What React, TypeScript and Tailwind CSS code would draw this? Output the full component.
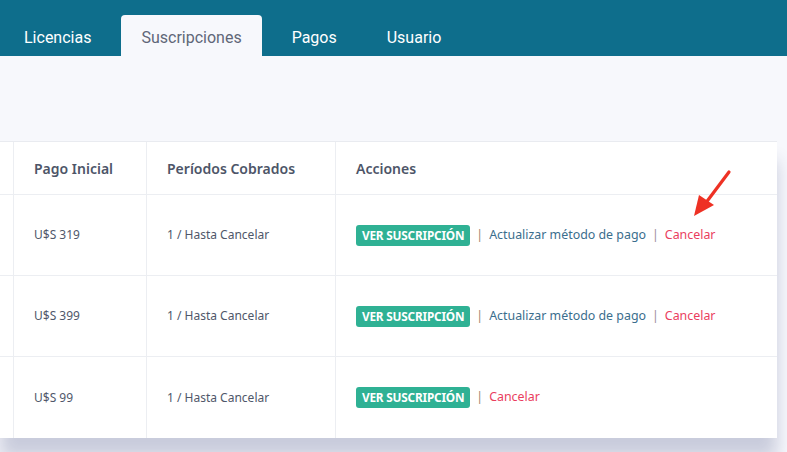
import React from 'react';

const tabs = ['Licencias', 'Suscripciones', 'Pagos', 'Usuario'];

const rows = [
  { amount: 'U$S 319', periods: '1 / Hasta Cancelar', update: true },
  { amount: 'U$S 399', periods: '1 / Hasta Cancelar', update: true },
  { amount: 'U$S 99', periods: '1 / Hasta Cancelar', update: false },
];

const cell = 'flex items-center border-l border-[#eceef2]';

const App = () => {
  return (
    <div className="relative h-[452px] w-[787px] overflow-hidden bg-[#f7f8fc] font-['Noto_Sans',sans-serif]">
      <header className="flex h-[56px] items-end gap-[10px] bg-[#0e6e8c] pl-[4px] font-['Roboto',sans-serif]">
        {tabs.map((tab) => (
          <div
            key={tab}
            className={
              tab === 'Suscripciones'
                ? 'h-[41px] rounded-t-[4px] bg-[#f7f8fc] px-5 pt-[13px] text-[16px] leading-[20px] text-[#5f6778]'
                : 'h-[41px] px-5 pt-[13px] text-[16px] leading-[20px] text-white'
            }
          >
            {tab}
          </div>
        ))}
      </header>

      <div className="mt-[85px] w-[777px] border-t border-[#e9ebf0] bg-white shadow-[0_20px_16px_rgba(40,50,110,0.22)]">
        <div className="grid h-[53px] grid-cols-[13px_133px_189px_442px] border-b border-[#eceef2] text-[14px] font-semibold text-[#4d5568]">
          <div />
          <div className={`${cell} pl-5`}>Pago Inicial</div>
          <div className={`${cell} pl-5`}>Períodos Cobrados</div>
          <div className={`${cell} pl-5`}>Acciones</div>
        </div>
        {rows.map((row, i) => (
          <div
            key={row.amount}
            className={`grid h-[81px] grid-cols-[13px_133px_189px_442px] text-[12px] text-[#4f576a] ${
              i < rows.length - 1 ? 'border-b border-[#eceef2]' : ''
            }`}
          >
            <div />
            <div className={`${cell} pl-5`}>{row.amount}</div>
            <div className={`${cell} pl-5`}>{row.periods}</div>
            <div className={`${cell} gap-[6px] pl-5 text-[12.4px]`}>
              <span className="rounded-[3px] bg-[#2fb194] px-[6px] py-[2px] text-[11.8px] font-bold leading-[17px] tracking-[-0.2px] text-white">
                VER SUSCRIPCIÓN
              </span>
              <span className="text-[#9a7f6e]">|</span>
              {row.update && (
                <>
                  <span className="text-[#3b6e8d]">Actualizar método de pago</span>
                  <span className="text-[#9a8a98]">|</span>
                </>
              )}
              <span className="text-[#ea3d5e]">Cancelar</span>
            </div>
          </div>
        ))}
      </div>

      <svg className="absolute left-[690px] top-[168px]" width="44" height="52" viewBox="0 0 44 52">
        <line x1="39" y1="4" x2="15" y2="36" stroke="#ee3124" strokeWidth="3.2" strokeLinecap="round" />
        <polygon points="4,48 9,27 24,37" fill="#ee3124" />
      </svg>
    </div>
  );
};

export default App;
